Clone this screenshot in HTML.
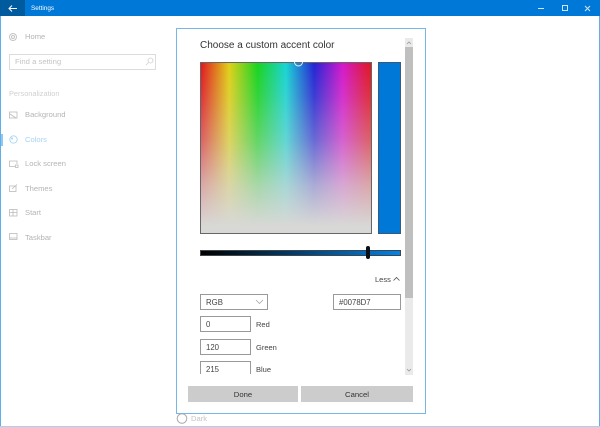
<!DOCTYPE html>
<html><head><meta charset="utf-8">
<style>
html,body{margin:0;padding:0;background:#fff}
body{width:600px;height:427px;position:relative;overflow:hidden;font-family:"Liberation Sans",sans-serif;color:#333}
.a{position:absolute;white-space:nowrap}
.nav{font-size:7.6px;color:#b4b4b4;left:25px;line-height:12px}
.t{font-size:7.5px;color:#444;line-height:12px}
.box{position:absolute;box-sizing:border-box;border:1px solid #999;background:#fff;height:16px;font-size:7.8px;line-height:15px;padding-left:5px;color:#444}
svg{position:absolute;overflow:visible}
</style></head><body>
<div class="a" style="left:0;top:0;width:600px;height:16px;background:#0078d7"></div>
<div class="a" style="left:0;top:0;width:25px;height:16px;background:#005a9e"></div>
<svg style="left:0;top:0" width="25" height="16" fill="none" stroke="#fff" stroke-width="1"><path d="M9 8.5h8M12 5.5l-3 3 3 3"/></svg>
<div class="a" style="left:31px;top:2px;font-size:6.4px;line-height:13px;color:#fff">Settings</div>
<svg style="left:500px;top:0" width="100" height="16" fill="none" stroke="#cfe6f8" stroke-width="1"><path d="M38 8.5h6"/><rect x="62.500" y="5.500" width="5" height="5"/><path d="M85 6l5 5M90 6l-5 5"/></svg>
<div class="a" style="left:0;top:16px;width:1px;height:411px;background:#5fb0ea"></div>
<div class="a" style="left:599px;top:16px;width:1px;height:411px;background:#5fb0ea"></div>
<div class="a" style="left:0;top:426px;width:600px;height:1px;background:#a8d2f2"></div>

<svg style="left:9px;top:33px" width="10" height="10" fill="none" stroke="#c4c4c4"><circle cx="4" cy="4" r="3.500"/><circle cx="4" cy="4" r="1.500"/></svg>
<div class="a nav" style="top:31px">Home</div>
<div class="a" style="left:9px;top:54px;width:147px;height:16px;box-sizing:border-box;border:1px solid #dcdcdc"></div>
<div class="a" style="left:15px;top:55px;font-size:7.7px;line-height:13px;color:#c4c4c4">Find a setting</div>
<svg style="left:145px;top:57px" width="9" height="9" fill="none" stroke="#d0d0d0" stroke-width=".8"><circle cx="5.500" cy="3.500" r="2.500"/><path d="M3.500 5.500L1 8"/></svg>
<div class="a" style="left:9px;top:88px;font-size:7.4px;line-height:12px;color:#d0d0d0">Personalization</div>

<svg style="left:9px;top:111px" width="9" height="9" fill="none" stroke="#bbb" stroke-width=".8"><rect x=".5" y="1" width="7.500" height="6"/><path d="M1 3l6 4"/></svg>
<div class="a nav" style="top:109px">Background</div>
<div class="a" style="left:1px;top:134px;width:2px;height:12px;background:#90c8f0"></div>
<svg style="left:9px;top:135px" width="9" height="9" fill="none" stroke="#a8d4f4" stroke-width=".9"><circle cx="4.500" cy="4.500" r="3.700"/><circle cx="3" cy="3.500" r=".6"/></svg>
<div class="a" style="left:25px;top:134px;font-size:7.6px;line-height:12px;color:#a6d2f3">Colors</div>
<svg style="left:9px;top:160px" width="10" height="9" fill="none" stroke="#bbb" stroke-width=".8"><path d="M6 6.500H.5V1h7.500v3"/><rect x="6.500" y="5" width="2.500" height="2.500"/></svg>
<div class="a nav" style="top:158px">Lock screen</div>
<svg style="left:9px;top:184px" width="10" height="9" fill="none" stroke="#bbb" stroke-width=".8"><rect x=".5" y="2" width="6.500" height="5.500"/><path d="M3 5l5-4.500"/></svg>
<div class="a nav" style="top:183px">Themes</div>
<svg style="left:9px;top:209px" width="9" height="8" fill="none" stroke="#bbb" stroke-width=".8"><rect x=".5" y=".5" width="7.500" height="6.500"/><path d="M.5 3.500h7.500M4 .5v6.500"/></svg>
<div class="a nav" style="top:207px">Start</div>
<svg style="left:9px;top:233px" width="9" height="8" fill="none" stroke="#bbb" stroke-width=".8"><rect x=".5" y=".5" width="7.500" height="6"/><path d="M.5 5h7.500"/></svg>
<div class="a nav" style="top:232px">Taskbar</div>
<svg style="left:176px;top:412px" width="12" height="12" fill="none" stroke="#aaa"><circle cx="6" cy="6.500" r="4.800"/></svg>
<div class="a" style="left:191px;top:412px;font-size:7.6px;line-height:13px;color:#c4c4c4">Dark</div>

<!-- dialog -->
<div class="a" style="left:176px;top:28px;width:250px;height:386px;box-sizing:border-box;border:1px solid #78b6e8;background:#fff"></div>
<div class="a" style="left:200px;top:39px;font-size:10px;line-height:14px;color:#333">Choose a custom accent color</div>

<div class="a" style="left:200px;top:62px;width:172px;height:172px;box-sizing:border-box;border:1px solid #666;background:linear-gradient(to bottom,rgba(216,216,214,0) 0%,rgba(216,216,214,.14) 20%,rgba(216,216,214,.38) 45%,rgba(216,216,214,.75) 72%,rgba(216,216,214,1) 96%),linear-gradient(to right,#e01820 0%,#e0d018 16.600%,#18d420 33.300%,#18d4d4 50%,#2424d4 66.600%,#d418cc 83.300%,#e01820 100%)"></div>
<svg style="left:293px;top:57px" width="12" height="10" fill="none" stroke="#e8f2f8"><path d="M1.500 5a4 4 0 0 0 8 0"/></svg>
<div class="a" style="left:378px;top:62px;width:23px;height:172px;box-sizing:border-box;border:1px solid #3a5a78;background:#0078d7"></div>

<div class="a" style="left:200px;top:250px;width:201px;height:6px;box-sizing:border-box;border:1px solid #444;background:linear-gradient(to right,#000,#0078d7 92%,#0084ec)"></div>
<div class="a" style="left:366px;top:246px;width:4px;height:13px;border-radius:2px;background:#0a0f1a"></div>

<!-- scrollbar -->
<div class="a" style="left:405px;top:38px;width:8px;height:337px;background:#eaeaea"></div>
<div class="a" style="left:405px;top:47px;width:8px;height:251px;background:#bfbfbf"></div>
<svg style="left:405px;top:38px" width="8" height="337" fill="none" stroke="#999" stroke-width=".8"><path d="M2 6l2-2 2 2M2 331l2 2 2-2"/></svg>

<div class="a t" style="left:375px;top:274px">Less</div>
<svg style="left:393px;top:276px" width="8" height="6" fill="none" stroke="#555" stroke-width=".8"><path d="M.5 4.500L3.500 1.500l3 3"/></svg>

<div class="box" style="left:200px;top:294px;width:68px">RGB</div>
<svg style="left:255px;top:299px" width="9" height="6" fill="none" stroke="#aaa" stroke-width=".8"><path d="M1 1l3.500 3.500L8 1"/></svg>
<div class="box" style="left:333px;top:294px;width:68px">#0078D7</div>

<div class="box" style="left:200px;top:316px;width:51px">0</div>
<div class="a t" style="left:256px;top:319px">Red</div>
<div class="box" style="left:200px;top:339px;width:51px">120</div>
<div class="a t" style="left:256px;top:342px">Green</div>
<div class="a" style="left:200px;top:361px;width:51px;height:13px;overflow:hidden"><div class="box" style="left:0;top:0;width:51px">215</div></div>
<div class="a t" style="left:256px;top:364px">Blue</div>

<div class="a" style="left:188px;top:386px;width:110px;height:16px;background:#ccc;text-align:center;font-size:7.7px;line-height:17px;color:#333">Done</div>
<div class="a" style="left:301px;top:386px;width:112px;height:16px;background:#ccc;text-align:center;font-size:7.7px;line-height:17px;color:#333">Cancel</div>
</body></html>
